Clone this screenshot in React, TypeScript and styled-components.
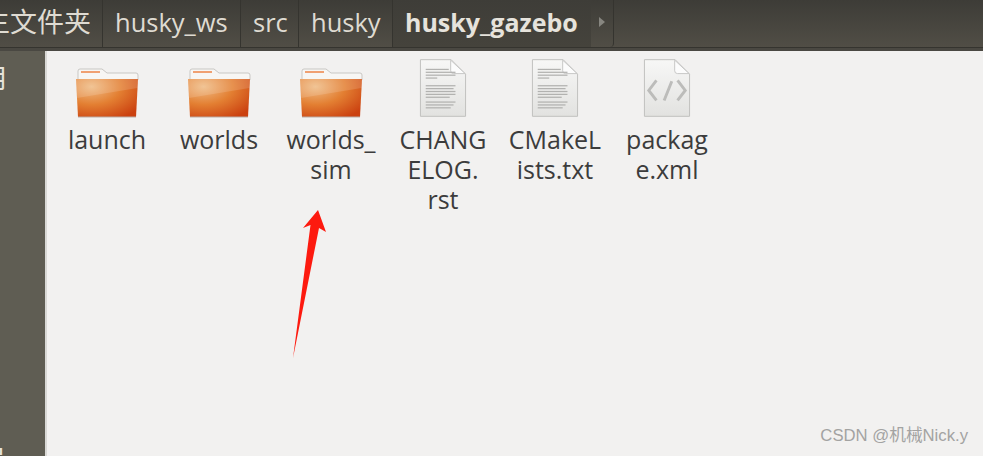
import React from 'react'
import styled, { createGlobalStyle } from 'styled-components'

const files = [
  { kind: 'folder', name: 'launch' },
  { kind: 'folder', name: 'worlds' },
  { kind: 'folder', name: 'worlds_\nsim' },
  { kind: 'doc', name: 'CHANG\nELOG.\nrst' },
  { kind: 'doc', name: 'CMakeL\nists.txt' },
  { kind: 'xml', name: 'packag\ne.xml' },
]

const crumbs = [
  { label: '主文件夹', width: 132 },
  { label: 'husky_ws', width: 138 },
  { label: 'src', width: 58 },
  { label: 'husky', width: 94 },
]

const docRows = [
  { y: 11, w: 24 },
  { y: 14, w: 31 },
  { y: 17, w: 31 },
  { y: 20, w: 12 },
  { y: 28, w: 31 },
  { y: 31, w: 29 },
  { y: 34, w: 31 },
  { y: 37, w: 31 },
  { y: 40, w: 25 },
  { y: 45, w: 31 },
  { y: 48, w: 29 },
  { y: 51, w: 26 },
]

const FolderIcon = () => (
  <svg width="64" height="52" viewBox="0 0 64 52">
    <defs>
      <radialGradient id="fg" cx="0.25" cy="0.2" r="0.95">
        <stop offset="0" stopColor="#efbb84" />
        <stop offset="0.5" stopColor="#e37f32" />
        <stop offset="1" stopColor="#cb4110" />
      </radialGradient>
    </defs>
    <path d="M3 14V5q0-2 2-2h22l5 4h29q2 0 2 2v5z" fill="#f7f6f4" stroke="#c9c7c4" />
    <rect x="6" y="5" width="19" height="2" fill="#f0a071" />
    <path d="M1 13h62l-2 38H3z" fill="url(#fg)" />
    <path d="M2.2 32L62.4 22 63 13H1z" fill="#fff" opacity="0.14" />
    <path d="M3 51h58" stroke="#b9ada5" strokeWidth="1" />
  </svg>
)

const PageIcon = ({ children }: { children: React.ReactNode }) => (
  <svg width="48" height="60" viewBox="0 0 50 62">
    <defs>
      <linearGradient id="pg" x1="0" y1="0" x2="0" y2="1">
        <stop offset="0" stopColor="#f7f7f6" />
        <stop offset="1" stopColor="#e2e2e0" />
      </linearGradient>
    </defs>
    <path d="M1.5 1.5h32l15 15v44h-47z" fill="url(#pg)" stroke="#bfbfbd" />
    <path d="M33 2v11q0 3 3 3h12z" fill="#fcfcfc" stroke="#c6c6c4" />
    {children}
  </svg>
)

const DocIcon = () => (
  <PageIcon>
    {docRows.map((r) => (
      <rect key={r.y} x="7" y={r.y} width={r.w} height="1.3" fill="#b2b2b0" />
    ))}
  </PageIcon>
)

const XmlIcon = () => (
  <PageIcon>
    <path
      d="M14 23L6 33.5 14 44M36 23L44 33.5 36 44M30 24L22 44"
      fill="none"
      stroke="#bcbcba"
      strokeWidth="3"
    />
  </PageIcon>
)

const RedArrow = () => (
  <ArrowLayer width="40" height="155" viewBox="0 0 40 155">
    <path d="M27 2L12 20 19.5 17 2 150 28 20 35 24z" fill="#fd1a0f" />
  </ArrowLayer>
)

export default function App() {
  return (
    <Window>
      <GlobalStyle />
      <PathBar>
        <Crumbs>
          {crumbs.map((c, i) => (
            <Crumb key={c.label} $width={c.width} $first={i === 0}>
              {c.label}
            </Crumb>
          ))}
          <ActiveCrumb>husky_gazebo</ActiveCrumb>
          <MoreCrumb>
            <svg width="8" height="12" viewBox="0 0 8 12">
              <path d="M1 1l6 5-6 5z" fill="#878680" />
            </svg>
          </MoreCrumb>
        </Crumbs>
      </PathBar>
      <Body>
        <Sidebar>
          <SideLabel>用</SideLabel>
          <SideLabel>号</SideLabel>
        </Sidebar>
        <Content>
          <FileGrid>
            {files.map((f) => (
              <FileItem key={f.name}>
                <IconSlot>
                  {f.kind === 'folder' && <FolderIcon />}
                  {f.kind === 'doc' && <DocIcon />}
                  {f.kind === 'xml' && <XmlIcon />}
                </IconSlot>
                <FileName>{f.name}</FileName>
              </FileItem>
            ))}
          </FileGrid>
          <RedArrow />
          <Watermark>CSDN @机械Nick.y</Watermark>
        </Content>
      </Body>
    </Window>
  )
}

const GlobalStyle = createGlobalStyle`
  html, body {
    margin: 0;
    padding: 0;
    overflow: hidden;
  }
`

const Window = styled.div`
  width: 983px;
  height: 456px;
  display: flex;
  flex-direction: column;
  overflow: hidden;
  font-family: "Open Sans", "Noto Sans CJK SC", sans-serif;
`

const PathBar = styled.div`
  height: 51px;
  flex: none;
  background: linear-gradient(#3d3c37, #514e46);
  border-bottom: 3px solid #4a4842;
  box-sizing: border-box;
`

const Crumbs = styled.div`
  display: flex;
  height: 48px;
  margin-left: -29px;
  border-bottom: 1px solid #35342f;
  box-sizing: border-box;
`

const Crumb = styled.div<{ $width: number; $first?: boolean }>`
  width: ${({ $width }) => $width}px;
  box-sizing: border-box;
  padding-left: 12px;
  line-height: 44px;
  font-size: ${({ $first }) => ($first ? 27 : 25.5)}px;
  color: #dfdbd2;
  white-space: nowrap;
  border-right: 1px solid #35342f;
`

const ActiveCrumb = styled.div`
  width: 198px;
  box-sizing: border-box;
  padding-left: 12px;
  line-height: 44px;
  font-size: 25px;
  font-weight: 700;
  color: #e6e3dc;
  background: linear-gradient(#3e3d38, #45433c);
`

const MoreCrumb = styled.div`
  width: 23px;
  box-sizing: border-box;
  display: flex;
  align-items: center;
  justify-content: center;
  padding-bottom: 4px;
  border-right: 1px solid #35342f;
  border-bottom-right-radius: 4px;
`

const Body = styled.div`
  flex: 1;
  display: flex;
  min-height: 0;
`

const Sidebar = styled.div`
  width: 45px;
  flex: none;
  overflow: hidden;
  background: #5f5d53;
  border-right: 2px solid #d9d8d5;
  display: flex;
  flex-direction: column;
  justify-content: space-between;
  padding: 13px 0 0;
`

const SideLabel = styled.div`
  margin-left: -20px;
  height: 27px;
  line-height: 27px;
  font-size: 27px;
  color: #e6e3dc;
  &:last-child {
    margin-bottom: -17px;
  }
`

const Content = styled.div`
  flex: 1;
  position: relative;
  background: #f2f1f0;
`

const FileGrid = styled.div`
  display: flex;
  align-items: flex-start;
  padding: 0 0 0 4px;
`

const FileItem = styled.div`
  width: 112px;
  flex: none;
  display: flex;
  flex-direction: column;
  align-items: center;
`

const IconSlot = styled.div`
  height: 67px;
  display: flex;
  align-items: flex-end;
  justify-content: center;
`

const FileName = styled.div`
  margin-top: 6px;
  width: 112px;
  text-align: center;
  white-space: pre-line;
  font-size: 25px;
  line-height: 30px;
  color: #3c3c3c;
`

const ArrowLayer = styled.svg`
  position: absolute;
  left: 244px;
  top: 157px;
`

const Watermark = styled.div`
  position: absolute;
  right: 15px;
  bottom: 10px;
  font-family: "Liberation Sans", "Noto Sans CJK SC", sans-serif;
  font-size: 16.7px;
  color: #a3a3a2;
`
